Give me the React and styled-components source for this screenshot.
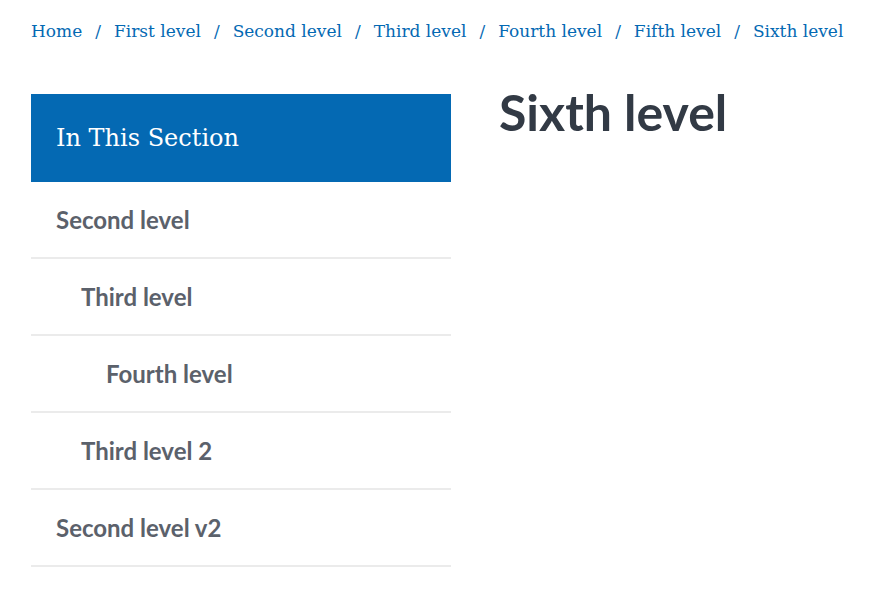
import React from 'react';
import styled, { createGlobalStyle } from 'styled-components';

const GlobalStyle = createGlobalStyle`
    body {
        margin: 0;
        background: #ffffff;
    }
`;

const blue = '#0469b3';
const line = '#ebebeb';

const Page = styled.div`
    padding: 19px 31px 0 31px;
`;

const Crumbs = styled.nav`
    display: flex;
    align-items: center;
    font-family: "DejaVu Serif", "Liberation Serif", serif;
    font-size: 17px;
    line-height: 24px;
    color: ${blue};
    white-space: nowrap;
`;

const CrumbLink = styled.a`
    color: ${blue};
    text-decoration: none;
`;

const Sep = styled.span`
    margin: 0 13px;
    color: ${blue};
`;

const Layout = styled.div`
    display: grid;
    grid-template-columns: 420px 1fr;
    column-gap: 48px;
    margin-top: 51px;
`;

const SideNav = styled.aside`
    display: flex;
    flex-direction: column;
`;

const SideHeader = styled.div`
    background: ${blue};
    color: #ffffff;
    height: 88px;
    display: flex;
    align-items: center;
    padding-left: 25px;
    font-family: "DejaVu Serif", "Liberation Serif", serif;
    font-size: 24px;
`;

const NavItem = styled.a`
    display: flex;
    align-items: center;
    height: 75px;
    border-bottom: 2px solid ${line};
    padding-left: ${p => 25 + p.$depth * 25}px;
    font-family: "Lato", "Open Sans", sans-serif;
    font-weight: 700;
    font-size: 24px;
    color: #5b616b;
    text-decoration: none;
`;

const Main = styled.main`
    padding-top: 0;
`;

const Title = styled.h1`
    margin: -12px 0 0 0;
    font-family: "Lato", "Open Sans", sans-serif;
    font-weight: 700;
    font-size: 50px;
    line-height: 60px;
    color: #323a45;
`;

const crumbs = ['Home', 'First level', 'Second level', 'Third level', 'Fourth level', 'Fifth level', 'Sixth level'];

const items = [
    {label: 'Second level', depth: 0},
    {label: 'Third level', depth: 1},
    {label: 'Fourth level', depth: 2},
    {label: 'Third level 2', depth: 1},
    {label: 'Second level v2', depth: 0},
];

export default function App() {
    return (
        <Page>
            <GlobalStyle/>
            <Crumbs>
                {crumbs.map((c, i) => (
                    <React.Fragment key={c}>
                        {i > 0 && <Sep>/</Sep>}
                        <CrumbLink href="#">{c}</CrumbLink>
                    </React.Fragment>
                ))}
            </Crumbs>
            <Layout>
                <SideNav>
                    <SideHeader>In This Section</SideHeader>
                    {items.map(it => (
                        <NavItem key={it.label} href="#" $depth={it.depth}>{it.label}</NavItem>
                    ))}
                </SideNav>
                <Main>
                    <Title>Sixth level</Title>
                </Main>
            </Layout>
        </Page>
    );
}
